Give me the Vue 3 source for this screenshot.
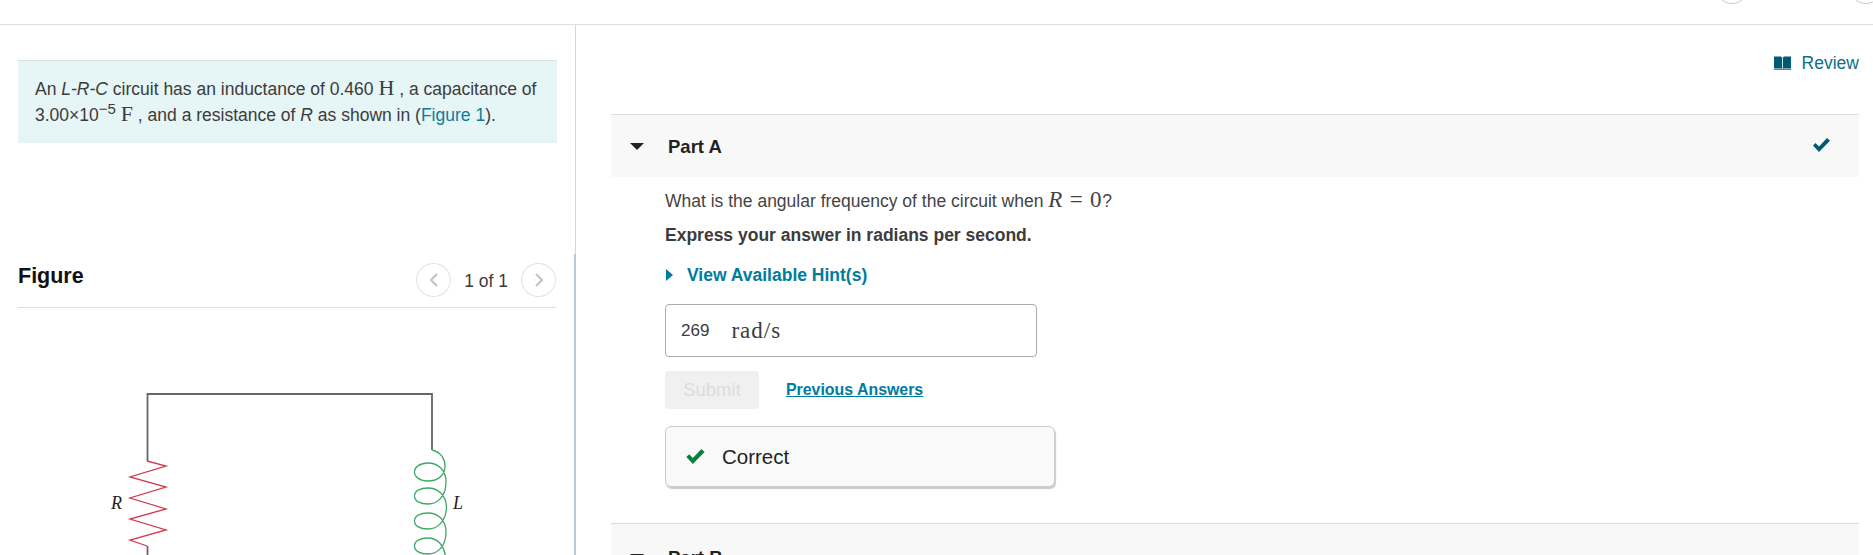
<template>
  <div class="page">
    <header class="top-bar">
      <span class="top-circle"></span>
      <span class="top-circle last"></span>
    </header>

    <div class="columns">
      <!-- left column: intro and figure -->
      <aside class="left">
        <div class="intro">
          <p>An <i>L-R-C</i> circuit has an inductance of 0.460 <span class="math h">H</span> , a capacitance of</p>
          <p>3.00×10<sup>−5</sup> <span class="math h">F</span> , and a resistance of <i>R</i> as shown in (<a class="fig-link">Figure 1</a>).</p>
        </div>

        <div class="figure-head">
          <h2>Figure</h2>
          <div class="pager">
            <button class="round">
              <svg width="10" height="16" viewBox="0 0 10 16"><path d="M8 2 L2 8 L8 14" /></svg>
            </button>
            <span>1 of 1</span>
            <button class="round">
              <svg width="10" height="16" viewBox="0 0 10 16"><path d="M2 2 L8 8 L2 14" /></svg>
            </button>
          </div>
        </div>

        <svg class="circuit" width="575" height="247" viewBox="0 308 575 247">
          <path class="wire" d="M147.500 461 V394 H432 V450" />
          <path class="wire" d="M147.500 546 V556" />
          <path class="res" d="M147 461 L166 466 L130 477 L166 487 L130 498 L166 509 L130 519 L166 530 L130 540 L147 546" />
          <path class="coil" d="M432 450 C441 452 445 459 445 466 C445 477 436 481 428 481 C420 481 414.5 477 414.5 472 C414.5 467 420 463 428 463 C438 463 446 470 446 482 C446 497 437 504 428 504 C420 504 414.5 501 414.5 496 C414.5 491 420 488 428 488 C438 488 446 495 446.500 507 C446 522 437 529 428 529 C420 529 414.5 526 414.5 521 C414.5 516 420 513 428 513 C438 513 446 520 446 532 C446 547 437 554 428 554 C420 554 414.5 551 414.5 546 C414.5 541 420 538 428 538 C438 538 445 546 446 560" />
          <text class="label" x="111" y="509">R</text>
          <text class="label" x="453" y="509">L</text>
        </svg>
      </aside>

      <!-- right column: the parts -->
      <main class="right">
        <div class="review-row">
          <a class="review">
            <svg width="17" height="14" viewBox="0 0 17 14">
              <path d="M0 0.500 H7 L8.100 1.500 V13 L7 12.500 H0 Z M17 0.500 H10 L8.900 1.500 V13 L10 12.500 H17 Z" />
              <path d="M0 13 H17 V14 H0 Z" opacity="0.7" />
            </svg>
            Review
          </a>
        </div>

        <section class="part-head">
          <span class="caret"></span>
          <h3>Part A</h3>
          <svg class="done" width="17" height="14" viewBox="0 0 17 14">
            <path d="M0 7.500 L2.500 5 L6 8.500 L14 0 L17 2.800 L6 14 Z" />
          </svg>
        </section>

        <div class="part-body">
          <p class="question">What is the angular frequency of the circuit when <span class="math eq"><i>R</i> = 0</span>?</p>
          <p class="express">Express your answer in radians per second.</p>
          <div class="hint"><span class="hint-caret"></span><a>View Available Hint(s)</a></div>
          <div class="answer"><span>269</span><span class="math unit">rad/s</span></div>
          <div class="actions">
            <button class="submit" disabled>Submit</button>
            <a class="prev">Previous Answers</a>
          </div>
          <div class="feedback">
            <svg width="19" height="15" viewBox="0 0 17 14">
              <path d="M0 7.500 L2.500 5 L6 8.500 L14 0 L17 2.800 L6 14 Z" />
            </svg>
            <span>Correct</span>
          </div>
        </div>

        <section class="part-head part-b">
          <span class="caret"></span>
          <h3>Part B</h3>
        </section>
      </main>
    </div>
  </div>
</template>

<script setup>
</script>

<style>
html, body {
  margin: 0;
  height: 555px;
  overflow: hidden;
  background: #fff;
}
</style>

<style scoped>
.page {
  width: 1873px;
  height: 555px;
  overflow: hidden;
  font-family: "Liberation Sans", Arial, sans-serif;
  font-size: 17.5px;
  color: #3c3c3c;
}

.top-bar {
  height: 25px;
  border-bottom: 1px solid #ddd;
  box-sizing: border-box;
  display: flex;
  justify-content: flex-end;
  overflow: hidden;
}

.top-circle {
  flex: none;
  width: 34px;
  height: 34px;
  margin-top: -30px;
  margin-right: 100px;
  border: 1px solid #ccc;
  border-radius: 50%;
  box-sizing: border-box;
}

.top-circle.last {
  margin-right: -10px;
}

.columns {
  display: flex;
  height: 530px;
}

/* left column, its divider gets thicker from the figure down */
.left {
  width: 576px;
  flex: none;
  box-sizing: border-box;
  padding-right: 1px;
  background:
    linear-gradient(#c9dae9, #c9dae9) right top / 1px 229px no-repeat,
    linear-gradient(#b4cce2, #b4cce2) right bottom / 2px 301px no-repeat;
}

.intro {
  margin: 35px 18px 0;
  width: 539px;
  height: 83px;
  box-sizing: border-box;
  padding: 14px 17px 0;
  background: #e6f5f6;
  border-top: 1px solid #ddd;
  line-height: 26px;
  white-space: nowrap;
}

.intro p {
  margin: 0;
  height: 26px;
}

.intro sup {
  font-size: 15px;
  line-height: 0;
  vertical-align: 7px;
}

.math {
  font-family: "Liberation Serif", "DejaVu Serif", serif;
}

.h {
  font-size: 22px;
}

.fig-link {
  color: #0b7d9c;
}

.figure-head {
  margin: 0 18px;
  width: 538px;
  height: 165px;
  box-sizing: border-box;
  padding-top: 120px;
  border-bottom: 1px solid #ddd;
  display: flex;
  justify-content: space-between;
  align-items: flex-start;
}

.figure-head h2 {
  margin: -2px 0 0;
  font-size: 21.5px;
  line-height: 30px;
  font-weight: 700;
  color: #111;
}

.pager {
  display: flex;
  align-items: center;
  gap: 13px;
}

.pager span {
  padding-top: 2px;
}

.round {
  width: 35px;
  height: 34px;
  padding: 0;
  border: 1px solid #e2e2e2;
  border-radius: 50%;
  background: #fff;
  display: flex;
  align-items: center;
  justify-content: center;
}

.round path {
  fill: none;
  stroke: #c4c4c4;
  stroke-width: 2.2;
}

.circuit {
  display: block;
}

.wire {
  fill: none;
  stroke: #666;
  stroke-width: 1.8;
}

.res {
  fill: none;
  stroke: #d23a52;
  stroke-width: 1.3;
}

.coil {
  fill: none;
  stroke: #3fa968;
  stroke-width: 1.3;
}

.label {
  font-family: "Liberation Serif", serif;
  font-style: italic;
  font-size: 18px;
  fill: #222;
}

/* right column */
.right {
  flex: 1;
  min-width: 0;
  padding: 0 14px 0 35px;
}

.review-row {
  height: 89px;
  display: flex;
  justify-content: flex-end;
  align-items: flex-start;
  padding-top: 26px;
  box-sizing: border-box;
}

.review {
  display: flex;
  align-items: center;
  gap: 11px;
  color: #0f6f87;
  line-height: 24px;
}

.review svg {
  fill: #005a72;
}

.part-head {
  height: 63px;
  box-sizing: border-box;
  background: #f8f8f8;
  border-top: 1px solid #ddd;
  display: flex;
  align-items: flex-start;
  padding: 21px 29px 0 19px;
}

.part-head h3 {
  margin: 0;
  font-size: 18.5px;
  line-height: 22px;
  font-weight: 700;
  color: #222;
  flex: 1;
}

.caret {
  width: 0;
  height: 0;
  margin: 7px 24px 0 0;
  border-left: 7px solid transparent;
  border-right: 7px solid transparent;
  border-top: 7px solid #222;
}

.done {
  fill: #005a72;
  margin-top: 2px;
}

.part-body {
  padding: 0 0 0 54px;
  height: 346px;
  box-sizing: border-box;
}

.question {
  margin: 0;
  padding-top: 11px;
  line-height: 24px;
  color: #444;
}

.eq {
  font-size: 23px;
  letter-spacing: 0.8px;
}

.express {
  margin: 10px 0 0;
  line-height: 24px;
  font-weight: 700;
}

.hint {
  margin-top: 16px;
  height: 24px;
  display: flex;
  align-items: center;
  gap: 14px;
  font-weight: 700;
  color: #007c9e;
}

.hint-caret {
  width: 0;
  height: 0;
  margin-left: 1px;
  border-top: 6.5px solid transparent;
  border-bottom: 6.5px solid transparent;
  border-left: 7px solid #007c9e;
}

.answer {
  margin-top: 17px;
  width: 372px;
  height: 53px;
  box-sizing: border-box;
  padding-left: 15px;
  border: 1px solid #aaa;
  border-radius: 4px;
  display: flex;
  align-items: center;
  gap: 22px;
  font-size: 17px;
}

.unit {
  font-size: 23px;
  letter-spacing: 1px;
}

.actions {
  margin-top: 14px;
  display: flex;
  align-items: center;
  gap: 27px;
}

.submit {
  width: 94px;
  height: 38px;
  padding: 0;
  border: 0;
  border-radius: 2px;
  background: #f0f0f0;
  color: #dcdcdc;
  font: 18.5px "Liberation Sans", Arial, sans-serif;
}

.prev {
  color: #007c9e;
  font-size: 15.9px;
  font-weight: 700;
  text-decoration: underline;
}

.feedback {
  margin-top: 17px;
  width: 390px;
  height: 61px;
  box-sizing: border-box;
  padding-left: 20px;
  background: #f9f9f9;
  border: 1px solid #ccc;
  border-radius: 6px;
  box-shadow: 1px 2px 1px #ccc;
  display: flex;
  align-items: center;
  gap: 17px;
  font-size: 20.5px;
  color: #222;
}

.feedback svg {
  fill: #0a8040;
}

.part-b {
  height: 40px;
  padding-top: 23px;
}
</style>
